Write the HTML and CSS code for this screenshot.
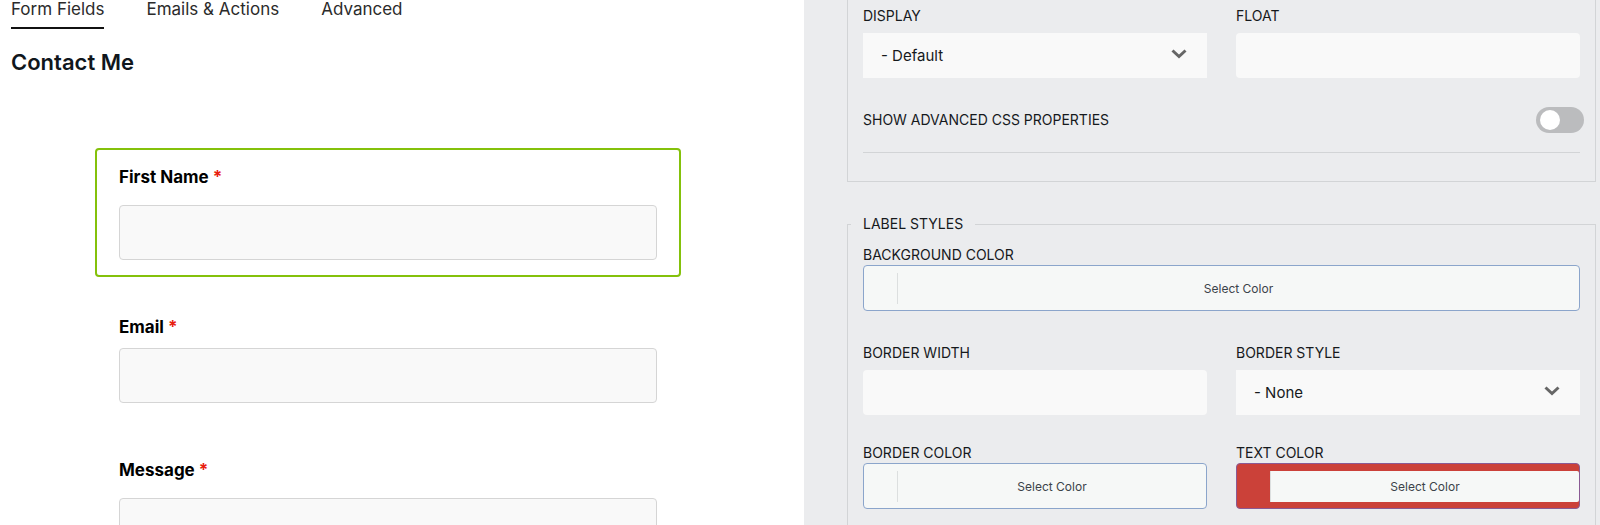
FILE: index.html
```html
<!DOCTYPE html>
<html lang="en">
<head>
<meta charset="UTF-8">
<title>Contact Me - Form Builder</title>
<link rel="stylesheet" href="styles.css">
</head>
<body>
<div class="builder">

  <!-- form preview -->
  <main class="preview">
    <nav class="tabs">
      <a href="#fields" class="active">Form Fields</a>
      <a href="#actions">Emails &amp; Actions</a>
      <a href="#advanced">Advanced</a>
    </nav>
    <h1>Contact Me</h1>

    <form class="fields">
      <div class="field selected">
        <label for="first-name">First Name <span class="req">*</span></label>
        <input type="text" id="first-name">
      </div>
      <div class="field tight">
        <label for="email">Email <span class="req">*</span></label>
        <input type="email" id="email">
      </div>
      <div class="field">
        <label for="message">Message <span class="req">*</span></label>
        <textarea id="message"></textarea>
      </div>
    </form>
  </main>

  <!-- style settings -->
  <aside class="drawer">
    <fieldset class="group group-top">
      <div class="settings">
        <div class="setting">
          <label for="display">Display</label>
          <div class="select">
            <select id="display">
              <option>- Default</option>
              <option>Block</option>
              <option>Inline</option>
            </select>
            <svg viewBox="0 0 16 10"><path d="M1.5 1.5L8 7.5L14.5 1.5"/></svg>
          </div>
        </div>
        <div class="setting">
          <label for="float">Float</label>
          <input type="text" id="float">
        </div>
      </div>
      <div class="toggle-row">
        <label for="show-advanced">Show Advanced CSS Properties</label>
        <input type="checkbox" class="toggle" id="show-advanced">
      </div>
    </fieldset>

    <fieldset class="group">
      <legend>Label Styles</legend>
      <div class="settings">
        <div class="setting color full">
          <label for="bg-color">Background Color</label>
          <button type="button" class="picker" id="bg-color"><span>Select Color</span></button>
        </div>
        <div class="setting">
          <label for="border-width">Border Width</label>
          <input type="text" id="border-width">
        </div>
        <div class="setting">
          <label for="border-style">Border Style</label>
          <div class="select">
            <select id="border-style">
              <option>- None</option>
              <option>Solid</option>
              <option>Dashed</option>
            </select>
            <svg viewBox="0 0 16 10"><path d="M1.5 1.5L8 7.5L14.5 1.5"/></svg>
          </div>
        </div>
        <div class="setting color">
          <label for="border-color">Border Color</label>
          <button type="button" class="picker" id="border-color"><span>Select Color</span></button>
        </div>
        <div class="setting color">
          <label for="text-color">Text Color</label>
          <button type="button" class="picker red" id="text-color"><span>Select Color</span></button>
        </div>
      </div>
    </fieldset>
  </aside>

</div>
</body>
</html>
```

FILE: styles.css
```css
* {box-sizing: border-box;}
body {
  margin: 0;
  font-family: Inter, "Liberation Sans", sans-serif;
  color: #16191c;
  background: #fff;
}
input, select, textarea, button {font-family: inherit; margin: 0;}

.builder {
  display: grid;
  grid-template-columns: 201fr 199fr;
  height: 100vh;
  overflow: hidden;
}

/* left side */
.preview {padding: 0 0 0 11px;}
.tabs {display: flex; gap: 42px;}
.tabs a {
  height: 29px;
  line-height: 18px;
  font-size: 17px;
  color: #2b2b2b;
  text-decoration: none;
}
.tabs .active {border-bottom: 2px solid #111;}
h1 {
  margin: 19px 0 0;
  font-size: 22px;
  line-height: 28px;
  font-weight: 600;
  color: #10161c;
}
.fields {
  display: flex;
  flex-direction: column;
  gap: 21px;
  padding: 72px 123px 0 84px;
}
.field {
  display: flex;
  flex-direction: column;
  gap: 16px;
  padding: 15px 22px;
  border: 2px solid transparent;
  border-radius: 4px;
}
.tight {gap: 9px;}
.selected {border-color: #84c10b;}
.field label {
  font-size: 17px;
  line-height: 24px;
  font-weight: 700;
  color: #000;
}
.req {color: #e8200f;}
.field input, .field textarea {
  width: 100%;
  height: 55px;
  padding: 0 14px;
  border: 1px solid #d5d5d5;
  border-radius: 4px;
  background: #f9f9f9;
  resize: none;
}
.field textarea {height: 150px;}

/* right side */
.drawer {
  padding: 0 4px 0 43px;
  background: #ebecee;
}
.group {
  min-width: 0;
  margin: 0;
  padding: 11px 15px 20px;
  border: 1px solid #d2d4d6;
}
.group-top {
  margin-bottom: 32px;
  padding: 6px 15px 28px;
  border-top: 0;
}
legend {
  margin-left: -12px;
  padding: 0 12px;
}
legend, .setting label, .toggle-row label {
  font-size: 14px;
  line-height: 20px;
  text-transform: uppercase;
}
.settings {
  display: grid;
  grid-template-columns: 1fr 1fr;
  column-gap: 29px;
  row-gap: 28px;
}
.setting {display: flex; flex-direction: column; gap: 7px;}
.full {grid-column: 1 / 3; margin-bottom: 4px;}
.group .color {gap: 0;}
.setting input, .setting select {
  width: 100%;
  height: 45px;
  padding: 0 18px;
  border: 0;
  background: #f9f9f9;
  font-size: 15px;
  color: #16191c;
}
.setting input {border-radius: 4px;}
.setting select {appearance: none; border-radius: 0;}
.select {position: relative; display: flex;}
.select svg {
  position: absolute;
  top: 16px;
  right: 20px;
  width: 16px;
  height: 10px;
  fill: none;
  stroke: #666;
  stroke-width: 3;
  pointer-events: none;
}

.toggle-row {
  display: flex;
  align-items: center;
  justify-content: space-between;
  height: 75px;
  padding-top: 10px;
  border-bottom: 1px solid #d2d4d6;
}
.toggle {
  appearance: none;
  width: 48px;
  height: 26px;
  margin-right: -4px;
  padding: 3px 4px;
  border-radius: 13px;
  background: #bbbcbe;
}
.toggle::before {
  content: "";
  display: block;
  width: 20px;
  height: 20px;
  border-radius: 50%;
  background: #fff;
}

/* color pickers */
.picker {
  display: flex;
  align-items: center;
  width: 100%;
  height: 46px;
  padding: 0 0 0 33px;
  border: 1px solid #8ba5cb;
  border-radius: 4px;
  background: #f6f8f7;
}
.picker span {
  flex: 1;
  border-left: 1px solid #dcdfdf;
  border-radius: 0 2px 2px 0;
  background: #f6f8f7;
  font-size: 12px;
  line-height: 31px;
  color: #3c434a;
}
.picker.red {background: #cb4139; border-color: #8a5a94;}
```
